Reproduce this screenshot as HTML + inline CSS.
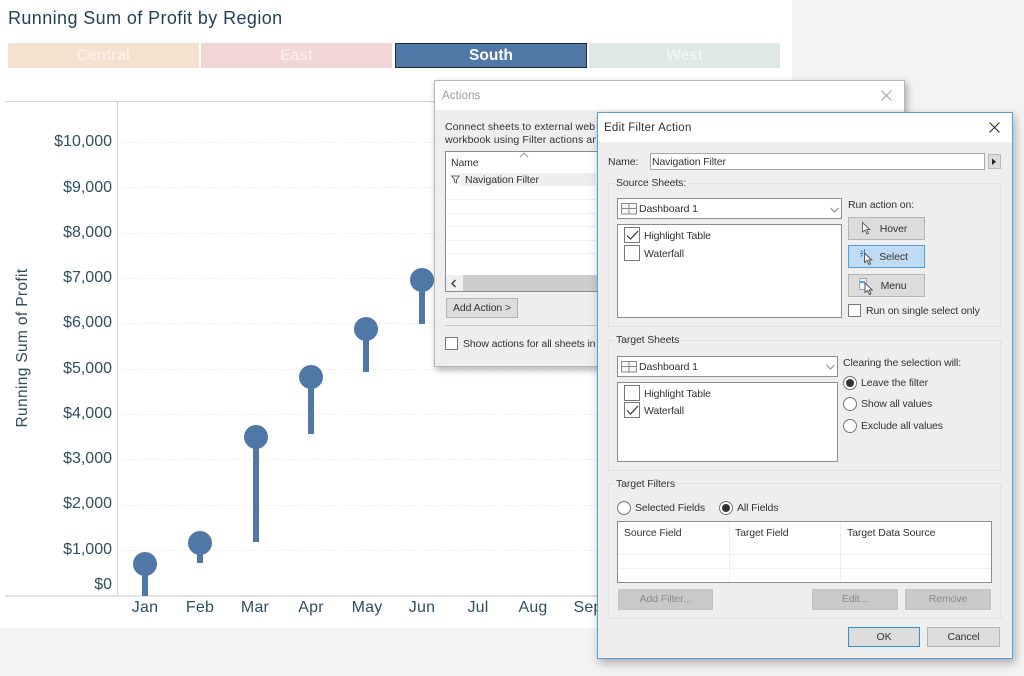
<!DOCTYPE html>
<html><head><meta charset="utf-8"><style>
html,body{margin:0;padding:0}
body{width:1024px;height:676px;background:#f3f3f3;position:relative;overflow:hidden;font-family:"Liberation Sans",sans-serif;filter:blur(.3px)}
div{position:absolute;box-sizing:border-box}
.t{white-space:nowrap;font-size:10.5px;line-height:14px;color:#333;letter-spacing:-.12px}
.y{width:112px;left:0;text-align:right;font-size:16px;line-height:20px;color:#2f4f5f;white-space:nowrap}
.x{width:60px;text-align:center;font-size:16px;line-height:20px;color:#2f4f5f;letter-spacing:.2px}
.tab{top:43px;height:25px;width:191px;text-align:center;color:rgba(255,255,255,.5);font-weight:bold;font-size:15.5px;line-height:25px}
.g{left:118px;width:674px;height:0;border-top:1px dashed #eeeeee}
.s{background:#4f78a6;width:6px}
.c{background:#4f78a6;width:24px;height:24px;border-radius:50%}
.cb{width:16px;height:16px;background:#fff;border:1px solid #777}
.rd{width:14px;height:14px;background:#fff;border:1px solid #777;border-radius:50%}
.rd.on::after{content:"";position:absolute;left:2px;top:2px;width:8px;height:8px;background:#333;border-radius:50%}
.btn{background:#dcdcdc;border:1px solid #b4b4b4;text-align:center;font-size:10.5px;color:#333;letter-spacing:-.1px}
.dis{background:#c9c9c9;border:1px solid #c4c4c4;color:#8b8b8b;text-align:center;font-size:10.5px;letter-spacing:-.1px;height:21px;line-height:19px;top:589px}
.gb{border:1px solid #e2e2e2;left:608px;width:393px}
.lg{background:#eee;padding:0 1px;left:615px}
.box{background:#fff;border:1px solid #8c8c8c}
</style></head><body>

<div style="left:0;top:0;width:792px;height:628px;background:#fff"></div>
<div class="t" style="left:8px;top:7px;font-size:18px;line-height:22px;color:#1f4458;letter-spacing:.4px">Running Sum of Profit by Region</div>
<div class="tab" style="left:8px;background:#f4e1ce">Central</div>
<div class="tab" style="left:201px;background:#f2d6d7">East</div>
<div class="tab" style="left:395px;width:192px;background:#4f78a6;border:1px solid #1e2a36;color:#fff;line-height:23px">South</div>
<div class="tab" style="left:589px;background:#dde8e7">West</div>

<div style="left:5px;top:101px;width:787px;height:1px;background:#d4d4d4"></div>
<div style="left:117px;top:101px;width:1px;height:495px;background:#d4d4d4"></div>
<div style="left:5px;top:595px;width:787px;height:2px;background:#e3e3e3"></div>

<div class="g" style="top:142px"></div><div class="g" style="top:187px"></div><div class="g" style="top:233px"></div><div class="g" style="top:278px"></div><div class="g" style="top:323px"></div><div class="g" style="top:369px"></div><div class="g" style="top:414px"></div><div class="g" style="top:459px"></div><div class="g" style="top:505px"></div><div class="g" style="top:550px"></div>

<div class="y" style="top:132px">$10,000</div><div class="y" style="top:178px">$9,000</div><div class="y" style="top:223px">$8,000</div><div class="y" style="top:268px">$7,000</div><div class="y" style="top:313px">$6,000</div><div class="y" style="top:359px">$5,000</div><div class="y" style="top:404px">$4,000</div><div class="y" style="top:449px">$3,000</div><div class="y" style="top:494px">$2,000</div><div class="y" style="top:540px">$1,000</div><div class="y" style="top:575px">$0</div>

<div class="t" style="left:-59px;top:338px;width:160px;text-align:center;transform:translateX(2px) rotate(-90deg);font-size:15.5px;line-height:20px;color:#2f4f5f;letter-spacing:.35px">Running Sum of Profit</div>

<div class="s" style="left:142px;top:564px;height:32px"></div><div class="c" style="left:133px;top:552px"></div>
<div class="s" style="left:197px;top:543px;height:20px"></div><div class="c" style="left:188px;top:531px"></div>
<div class="s" style="left:253px;top:437px;height:105px"></div><div class="c" style="left:244px;top:425px"></div>
<div class="s" style="left:308px;top:377px;height:57px"></div><div class="c" style="left:299px;top:365px"></div>
<div class="s" style="left:363px;top:329px;height:43px"></div><div class="c" style="left:354px;top:317px"></div>
<div class="s" style="left:419px;top:280px;height:44px"></div><div class="c" style="left:410px;top:268px"></div>

<div class="x" style="left:115px;top:598px">Jan</div><div class="x" style="left:170px;top:598px">Feb</div><div class="x" style="left:225px;top:598px">Mar</div><div class="x" style="left:281px;top:598px">Apr</div><div class="x" style="left:337px;top:598px">May</div><div class="x" style="left:392px;top:598px">Jun</div><div class="x" style="left:448px;top:598px">Jul</div><div class="x" style="left:503px;top:598px">Aug</div><div class="x" style="left:558px;top:598px">Sep</div>

<!-- Actions dialog -->
<div style="left:434px;top:80px;width:471px;height:287px;background:#eee;border:1px solid #b5b5b5;box-shadow:2px 3px 7px rgba(0,0,0,.3)">
<div style="left:0;top:0;width:469px;height:29px;background:#fff"></div>
</div>
<div class="t" style="left:442px;top:89px;font-size:11.5px;color:#9a9a9a;letter-spacing:.1px">Actions</div>
<svg style="position:absolute;left:881px;top:90px" width="11" height="11"><path d="M.5.5l10 10M10.5.5l-10 10" stroke="#a0a0a0" fill="none"/></svg>
<div class="t" style="left:445px;top:120px;letter-spacing:.1px;width:151px;overflow:hidden">Connect sheets to external web resources and other sheets in the</div>
<div class="t" style="left:445px;top:133px;width:151px;overflow:hidden;letter-spacing:.1px">workbook using Filter actions and URL</div>
<div class="box" style="left:445px;top:151px;width:155px;height:141px"></div>
<svg style="position:absolute;left:519px;top:152px" width="10" height="6"><path d="M1 5l4-4 4 4" stroke="#999" fill="none"/></svg>
<div class="t" style="left:451px;top:156px">Name</div>
<div style="left:446px;top:173px;width:150px;height:13px;background:#eee"></div>
<div style="left:446px;top:173px;width:15px;height:13px;background:#fff"></div>
<svg style="position:absolute;left:451px;top:175px" width="9" height="9"><path d="M.5 1h8L5.5 4.500v3.500l-2-1V4.500z" stroke="#666" fill="none"/></svg>
<div class="t" style="left:465px;top:173px">Navigation Filter</div>
<div style="left:446px;top:199px;width:150px;height:1px;background:#eee"></div>
<div style="left:446px;top:213px;width:150px;height:1px;background:#eee"></div>
<div style="left:446px;top:226px;width:150px;height:1px;background:#eee"></div>
<div style="left:446px;top:240px;width:150px;height:1px;background:#eee"></div>
<div style="left:446px;top:253px;width:150px;height:1px;background:#eee"></div>
<div style="left:446px;top:275px;width:152px;height:16px;background:#cdcdcd"></div>
<div style="left:446px;top:275px;width:17px;height:16px;background:#f0f0f0"></div>
<svg style="position:absolute;left:450px;top:279px" width="8" height="9"><path d="M5.500 1L2 4.500 5.500 8" stroke="#444" stroke-width="1.500" fill="none"/></svg>
<div class="btn" style="left:446px;top:298px;width:72px;height:20px;line-height:19px">Add Action &gt;</div>
<div style="left:445px;top:325px;width:152px;height:1px;background:#c4c4c4"></div>
<div class="cb" style="left:445px;top:337px;width:13px;height:13px"></div>
<div class="t" style="left:463px;top:337px;width:134px;overflow:hidden">Show actions for all sheets in this workbook</div>

<!-- Edit Filter Action dialog -->
<div style="left:597px;top:112px;width:416px;height:547px;background:#eee;border:1px solid #5aa0d8;box-shadow:2px 4px 9px rgba(0,0,0,.3)"></div>
<div style="left:598px;top:113px;width:414px;height:29px;background:#fff"></div>
<div class="t" style="left:604px;top:121px;font-size:11.5px;letter-spacing:.25px">Edit Filter Action</div>
<svg style="position:absolute;left:989px;top:122px" width="11" height="11"><path d="M.5.5l10 10M10.500.5l-10 10" stroke="#222" fill="none"/></svg>
<div class="t" style="left:608px;top:155px">Name:</div>
<div style="left:650px;top:153px;width:335px;height:17px;background:#fff;border:1px solid #a8a8a8"></div>
<div class="t" style="left:652px;top:155px">Navigation Filter</div>
<div style="left:988px;top:154px;width:13px;height:15px;background:#dcdcdc;border:1px solid #bbb"></div>
<svg style="position:absolute;left:992px;top:158px" width="5" height="8"><path d="M0 .5L4 3.800 0 7z" fill="#222"/></svg>

<div class="gb" style="top:183px;height:144px"></div>
<div class="t lg" style="top:176px">Source Sheets:</div>
<div class="box" style="left:617px;top:198px;width:225px;height:21px"></div>
<svg style="position:absolute;left:621px;top:203px" width="16" height="12"><path d="M.5.5h15v10.500H.5zM.5 5.500h15M8 .5v10.500" stroke="#8a8a8a" fill="#f7f7f7"/></svg>
<div class="t" style="left:639px;top:202px">Dashboard 1</div>
<svg style="position:absolute;left:830px;top:207px" width="9" height="6"><path d="M.5 1L4.500 5l4-4" stroke="#888" fill="none"/></svg>
<div class="box" style="left:617px;top:224px;width:225px;height:94px"></div>
<div class="cb" style="left:624px;top:227px"></div>
<svg style="position:absolute;left:626px;top:230px" width="13" height="11"><path d="M1 5.500L4.500 9 12 1" stroke="#333" stroke-width="1.200" fill="none"/></svg>
<div class="t" style="left:644px;top:229px">Highlight Table</div>
<div class="cb" style="left:624px;top:245px"></div>
<div class="t" style="left:644px;top:247px">Waterfall</div>
<div class="t" style="left:848px;top:198px">Run action on:</div>
<div class="btn" style="left:848px;top:217px;width:77px;height:23px;line-height:22px;padding-left:14px">Hover</div>
<div class="btn" style="left:848px;top:245px;width:77px;height:23px;line-height:22px;padding-left:14px;background:#bfdcf4;border-color:#4f9fe0">Select</div>
<div class="btn" style="left:848px;top:274px;width:77px;height:23px;line-height:22px;padding-left:14px">Menu</div>
<svg style="position:absolute;left:860px;top:221px" width="14" height="15"><path d="M2.500 1.500v9.500l2.500-2 2 4 1.500-.7-1.800-3.800h3z" fill="#fff" stroke="#666"/></svg>
<svg style="position:absolute;left:859px;top:249px" width="16" height="17"><path d="M5.500 4v9.500l2.500-2 2 4 1.500-.7-1.800-3.800h3z" fill="#fff" stroke="#555"/><path d="M1 4.500h3M2 1.500l2 2M5.500 0v3M1.500 7.500l2-1.500" stroke="#2b87d1" fill="none"/></svg>
<svg style="position:absolute;left:859px;top:278px" width="16" height="17"><path d="M.5.5h7v11h-7z" fill="#eef5fb" stroke="#9ab"/><path d="M1 3h5v2H1z" fill="#49a2e3"/><path d="M6 5v9.500l2.500-2 2 4 1.500-.7-1.800-3.800h3z" fill="#fff" stroke="#555"/></svg>
<div class="cb" style="left:848px;top:304px;width:13px;height:13px"></div>
<div class="t" style="left:866px;top:304px">Run on single select only</div>

<div class="gb" style="top:340px;height:131px"></div>
<div class="t lg" style="top:333px">Target Sheets</div>
<div class="box" style="left:617px;top:356px;width:221px;height:21px"></div>
<svg style="position:absolute;left:621px;top:361px" width="16" height="12"><path d="M.5.5h15v10.500H.5zM.5 5.500h15M8 .5v10.500" stroke="#8a8a8a" fill="#f7f7f7"/></svg>
<div class="t" style="left:639px;top:360px">Dashboard 1</div>
<svg style="position:absolute;left:826px;top:364px" width="9" height="6"><path d="M.5 1L4.500 5l4-4" stroke="#888" fill="none"/></svg>
<div class="box" style="left:617px;top:382px;width:221px;height:80px"></div>
<div class="cb" style="left:624px;top:385px"></div>
<div class="t" style="left:644px;top:387px">Highlight Table</div>
<div class="cb" style="left:624px;top:402px"></div>
<svg style="position:absolute;left:626px;top:405px" width="13" height="11"><path d="M1 5.500L4.500 9 12 1" stroke="#333" stroke-width="1.200" fill="none"/></svg>
<div class="t" style="left:644px;top:404px">Waterfall</div>
<div class="t" style="left:843px;top:356px">Clearing the selection will:</div>
<div class="rd on" style="left:843px;top:376px"></div><div class="t" style="left:861px;top:376px">Leave the filter</div>
<div class="rd" style="left:843px;top:397px"></div><div class="t" style="left:861px;top:397px">Show all values</div>
<div class="rd" style="left:843px;top:419px"></div><div class="t" style="left:861px;top:419px">Exclude all values</div>

<div class="gb" style="top:483px;height:136px"></div>
<div class="t lg" style="top:477px">Target Filters</div>
<div class="rd" style="left:617px;top:501px"></div><div class="t" style="left:635px;top:501px">Selected Fields</div>
<div class="rd on" style="left:719px;top:501px"></div><div class="t" style="left:737px;top:501px">All Fields</div>
<div class="box" style="left:617px;top:521px;width:375px;height:62px"></div>
<div style="left:729px;top:522px;width:1px;height:60px;background:#eee"></div>
<div style="left:840px;top:522px;width:1px;height:60px;background:#eee"></div>
<div style="left:618px;top:554px;width:373px;height:1px;background:#eee"></div>
<div style="left:618px;top:568px;width:373px;height:1px;background:#eee"></div>
<div class="t" style="left:624px;top:526px">Source Field</div>
<div class="t" style="left:735px;top:526px">Target Field</div>
<div class="t" style="left:847px;top:526px">Target Data Source</div>
<div class="dis" style="left:618px;width:95px">Add Filter...</div>
<div class="dis" style="left:812px;width:86px">Edit...</div>
<div class="dis" style="left:905px;width:86px">Remove</div>
<div class="btn" style="left:848px;top:627px;width:72px;height:20px;line-height:19px;border:1px solid #2f8fdc">OK</div>
<div class="btn" style="left:927px;top:627px;width:73px;height:20px;line-height:19px">Cancel</div>

</body></html>
